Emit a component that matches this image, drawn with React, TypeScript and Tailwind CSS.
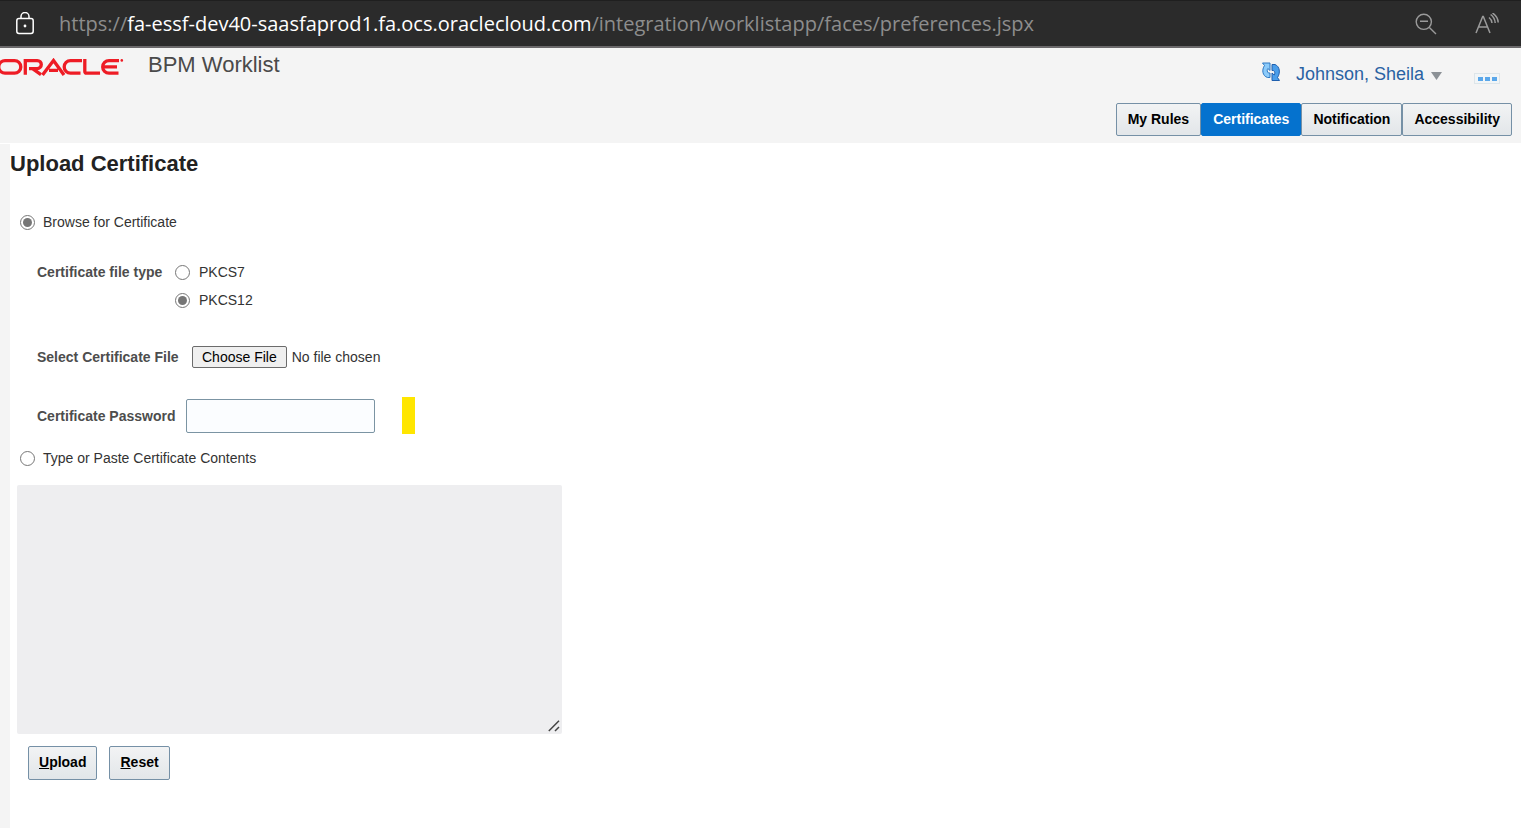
import { useState } from "react";

const TABS = ["My Rules", "Certificates", "Notification", "Accessibility"] as const;

const BUTTON =
  "rounded-xs border border-[#7590a6] bg-linear-to-b from-[#f2f3f4] to-[#e2e6e9] pb-[2px] text-sm leading-4 font-bold text-black";
const RADIO = "m-0 size-[15px] shrink-0 accent-[#767676]";
const LABEL = "text-sm leading-4 font-bold text-[#4d4d4d]";

function LockIcon() {
  return (
    <svg width="20" height="24" viewBox="0 0 20 24" fill="none" stroke="#fff" strokeWidth="1.5" aria-hidden="true">
      <rect x="1.8" y="6.5" width="16.4" height="15" rx="2.2" />
      <path d="M6 6.5V4.500a4 4 0 0 1 8 0v2" />
      <circle cx="10" cy="14" r="1.4" fill="#fff" stroke="none" />
    </svg>
  );
}

function ZoomOutIcon() {
  return (
    <svg width="22" height="22" viewBox="0 0 22 22" fill="none" stroke="#9a9a9a" strokeWidth="1.4" aria-hidden="true">
      <circle cx="8.8" cy="8.8" r="7.6" />
      <path d="M14.4 14.4 21 21M5 8.2h8" />
    </svg>
  );
}

function ReadAloudIcon() {
  return (
    <svg width="24" height="22" viewBox="0 0 24 22" fill="none" stroke="#9a9a9a" strokeWidth="1.5" aria-hidden="true">
      <path d="M1 20 7.700 3.500h.6L15 20M3.500 14h9" />
      <path d="M14 4.500q2.700 2 3 5.500M15.600 1.500q4.200 3 4.600 8.500M17.500 0q5.300 3.400 5.700 9.500" />
    </svg>
  );
}

function OracleLogo() {
  return (
    <svg width="124" height="18" viewBox="0 0 124 18" fill="none" stroke="#ee1c25" strokeWidth="3.3" role="img" aria-label="Oracle">
      <path d="M5 2.600h9.500a6.300 6.300 0 0 1 0 12.600H5a6.300 6.300 0 0 1 0-12.600z" />
      <path d="M25.300 16.800V2.600h12a4 4 0 0 1 0 8H29M32.500 10.600l8.500 6" />
      <path d="M42.500 17 53.500 2.500 64 17M49 12.300h9" />
      <path d="M82 2.600H70.500a6.300 6.300 0 0 0 0 12.600H80.500" />
      <path d="M84.800 1v12.200a2 2 0 0 0 2 2H100" />
      <path d="M119 2.600h-10a6.300 6.300 0 0 0 0 12.600h9.500M104 8.900h13" />
      <circle cx="121.8" cy="2.4" r="1.3" fill="#ee1c25" stroke="none" />
    </svg>
  );
}

function RefreshIcon() {
  return (
    <svg width="20" height="20" viewBox="0 0 20 20" strokeLinejoin="round" aria-hidden="true">
      <path fill="#8ccbfa" stroke="#2e78c2" d="M1.500 1H9v7.500L6.800 6.500C5.800 8 6 9.800 7.500 11H9v4.500H6.500C1.500 14 .5 8 3.500 3.500z" />
      <path fill="#4a9eea" stroke="#1f5fae" d="M18.500 18.500H11V11l2.200 2C14.200 11.500 14 9.700 12.500 8.500H11V2.500h3c5 2 5.500 8.500 2.500 13z" />
    </svg>
  );
}

export default function App() {
  const [tab, setTab] = useState<string>("Certificates");
  const [source, setSource] = useState("browse");
  const [fileType, setFileType] = useState("pkcs12");

  return (
    <div className="flex min-h-screen flex-col bg-white font-['Liberation_Sans',Arial,sans-serif]">
      <div className="flex h-12 items-center border-t border-b-2 border-t-[#1f1f1f] border-b-[#6b696b] bg-[#2b2b2b] pr-[22px] pl-[15px]">
        <LockIcon />
        <p className="ml-6 flex-1 font-['Open_Sans','Noto_Sans',sans-serif] text-xl text-[#8d8d8d]">
          https://<span className="text-white">fa-essf-dev40-saasfaprod1.fa.ocs.oraclecloud.com</span>
          /integration/worklistapp/faces/preferences.jspx
        </p>
        <button aria-label="Zoom out">
          <ZoomOutIcon />
        </button>
        <button aria-label="Read aloud" className="ml-[38px]">
          <ReadAloudIcon />
        </button>
      </div>

      <header className="bg-[#f4f4f4] pr-[9px] pb-[7px]">
        <div className="flex h-[55px] items-start">
          <div className="pt-[10px]">
            <OracleLogo />
          </div>
          <h1 className="ml-6 flex-1 pt-[5px] text-[22px] leading-6 text-[#4a4a4a]">BPM Worklist</h1>
          <button aria-label="Refresh" className="mt-[14px]">
            <RefreshIcon />
          </button>
          <button className="mt-4 ml-[15px] flex items-center gap-[7px] text-lg leading-5 text-[#2a62a3]">
            Johnson, Sheila
            <svg width="11" height="8" viewBox="0 0 11 8" className="mt-1" fill="#8c9196" aria-hidden="true">
              <path d="M0 0h11L5.500 8z" />
            </svg>
          </button>
          <button
            aria-label="More"
            className="mt-[25px] mr-3 ml-8 flex h-[11px] w-[26px] items-center justify-center gap-[2px] border border-[#dde5e9] bg-[#f1f5f7]"
          >
            <span className="h-1 w-[5px] bg-[#5aa7ea]" />
            <span className="h-1 w-[5px] bg-[#5aa7ea]" />
            <span className="h-1 w-[5px] bg-[#5aa7ea]" />
          </button>
        </div>
        <nav className="flex justify-end">
          {TABS.map((t) => (
            <button
              key={t}
              onClick={() => setTab(t)}
              className={
                t === tab
                  ? "h-[33px] rounded-xs border border-[#0572ce] bg-[#0572ce] px-[11px] pb-[2px] text-sm leading-4 font-bold text-white"
                  : `h-[33px] px-[11px] ${BUTTON}`
              }
            >
              {t}
            </button>
          ))}
        </nav>
      </header>

      <main className="mt-px flex-1 border-l-10 border-[#f4f4f4] text-sm leading-4 text-[#333]">
        <h2 className="pt-2 text-[22px] leading-6 font-bold text-[#222]">Upload Certificate</h2>

        <form className="pt-[38px] pl-[7px]" onSubmit={(e) => e.preventDefault()}>
          <label className="ml-[3px] flex items-center gap-2">
            <input
              type="radio"
              name="source"
              className={RADIO}
              checked={source === "browse"}
              onChange={() => setSource("browse")}
            />
            Browse for Certificate
          </label>

          <fieldset className="mt-[34px] ml-5 flex">
            <legend className={`float-left w-[138px] ${LABEL}`}>Certificate file type</legend>
            <div className="flex flex-col gap-3">
              <label className="flex items-center gap-[9px]">
                <input
                  type="radio"
                  name="type"
                  className={RADIO}
                  checked={fileType === "pkcs7"}
                  onChange={() => setFileType("pkcs7")}
                />
                PKCS7
              </label>
              <label className="flex items-center gap-[9px]">
                <input
                  type="radio"
                  name="type"
                  className={RADIO}
                  checked={fileType === "pkcs12"}
                  onChange={() => setFileType("pkcs12")}
                />
                PKCS12
              </label>
            </div>
          </fieldset>

          <div className="mt-[38px] ml-5 flex items-center">
            <label htmlFor="file" className={`w-[155px] ${LABEL}`}>
              Select Certificate File
            </label>
            <input
              id="file"
              type="file"
              className="w-56 file:mr-[5px] file:h-[22px] file:rounded-xs file:border file:border-solid file:border-[#6b6b6b] file:bg-[#efefef] file:px-[9px] file:text-black"
            />
          </div>

          <div className="mt-[29px] ml-5 flex items-center">
            <label htmlFor="password" className={`w-[149px] ${LABEL}`}>
              Certificate Password
            </label>
            <input
              id="password"
              type="password"
              className="h-[34px] w-[189px] rounded-xs border border-[#7b94a3] bg-[#fbfdff] px-2"
            />
            <span className="ml-[27px] h-[37px] w-[13px] bg-[#ffe600]" />
          </div>

          <label className="mt-4 ml-[3px] flex items-center gap-2">
            <input
              type="radio"
              name="source"
              className={RADIO}
              checked={source === "paste"}
              onChange={() => setSource("paste")}
            />
            Type or Paste Certificate Contents
          </label>
          <div className="relative mt-[19px] w-[545px] max-w-full">
            <textarea
              aria-label="Certificate contents"
              className="block h-[249px] w-full resize-none rounded-xs bg-[#eeeef0] p-2"
              readOnly={source !== "paste"}
            />
            <svg
              width="12"
              height="12"
              viewBox="0 0 12 12"
              className="pointer-events-none absolute right-[2px] bottom-[2px]"
              stroke="#444"
              strokeWidth="1.5"
              aria-hidden="true"
            >
              <path d="M.8 11 11 .8M7 11l4-4" />
            </svg>
          </div>

          <div className="mt-3 ml-[11px] flex gap-3">
            <button className={`h-[34px] px-[10px] ${BUTTON}`}>
              <span className="underline">U</span>pload
            </button>
            <button type="reset" className={`h-[34px] px-[10px] ${BUTTON}`}>
              <span className="underline">R</span>eset
            </button>
          </div>
        </form>
      </main>
    </div>
  );
}
